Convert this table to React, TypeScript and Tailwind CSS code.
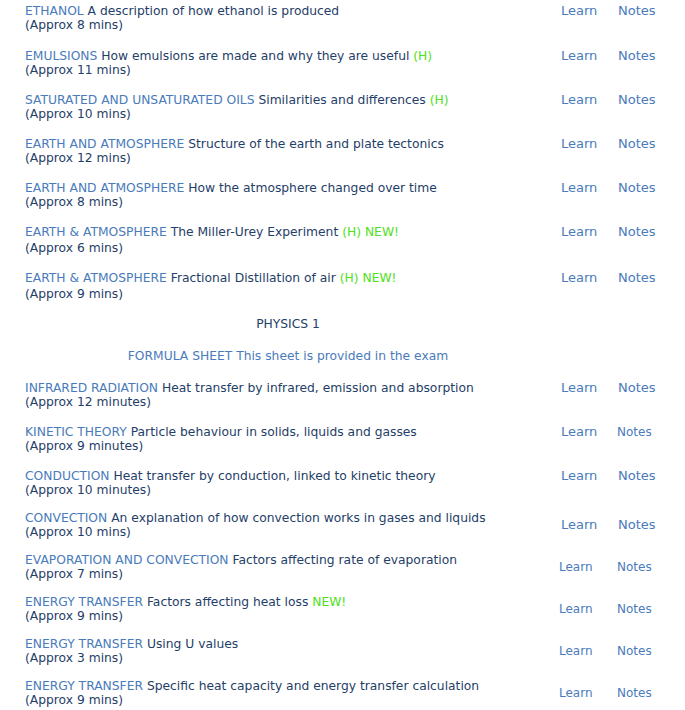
type Row = {
  cat: string;
  desc: string;
  time: string;
  h?: boolean;
  isNew?: boolean;
  gap: string;
  tall?: boolean;
  small?: boolean;
  middle?: boolean;
  notesSmall?: boolean;
};

const chemistry: Row[] = [
  { cat: "ETHANOL", desc: "A description of how ethanol is produced", time: "(Approx 8 mins)", gap: "mt-[4px]" },
  { cat: "EMULSIONS", desc: "How emulsions are made and why they are useful", h: true, time: "(Approx 11 mins)", gap: "mt-[17px]" },
  { cat: "SATURATED AND UNSATURATED OILS", desc: "Similarities and differences", h: true, time: "(Approx 10 mins)", gap: "mt-[16px]" },
  { cat: "EARTH AND ATMOSPHERE", desc: "Structure of the earth and plate tectonics", time: "(Approx 12 mins)", gap: "mt-[16px]" },
  { cat: "EARTH AND ATMOSPHERE", desc: "How the atmosphere changed over time", time: "(Approx 8 mins)", gap: "mt-[16px]" },
  { cat: "EARTH & ATMOSPHERE", desc: "The Miller-Urey Experiment", h: true, isNew: true, time: "(Approx 6 mins)", gap: "mt-[16px]", tall: true },
  { cat: "EARTH & ATMOSPHERE", desc: "Fractional Distillation of air", h: true, isNew: true, time: "(Approx 9 mins)", gap: "mt-[16px]", tall: true },
];

const physics: Row[] = [
  { cat: "INFRARED RADIATION", desc: "Heat transfer by infrared, emission and absorption", time: "(Approx 12 minutes)", gap: "mt-[18px]" },
  { cat: "KINETIC THEORY", desc: "Particle behaviour in solids, liquids and gasses", time: "(Approx 9 minutes)", gap: "mt-[16px]", notesSmall: true },
  { cat: "CONDUCTION", desc: "Heat transfer by conduction, linked to kinetic theory", time: "(Approx 10 minutes)", gap: "mt-[16px]" },
  { cat: "CONVECTION", desc: "An explanation of how convection works in gases and liquids", time: "(Approx 10 mins)", gap: "mt-[14px]", middle: true },
  { cat: "EVAPORATION AND CONVECTION", desc: "Factors affecting rate of evaporation", time: "(Approx 7 mins)", gap: "mt-[14px]", middle: true, small: true },
  { cat: "ENERGY TRANSFER", desc: "Factors affecting heat loss", isNew: true, time: "(Approx 9 mins)", gap: "mt-[14px]", middle: true, small: true },
  { cat: "ENERGY TRANSFER", desc: "Using U values", time: "(Approx 3 mins)", gap: "mt-[14px]", middle: true, small: true },
  { cat: "ENERGY TRANSFER", desc: "Specific heat capacity and energy transfer calculation", time: "(Approx 9 mins)", gap: "mt-[14px]", middle: true, small: true },
];

function TopicRow({ row }: { row: Row }) {
  const cols = row.small ? "grid-cols-[534px_58px_auto]" : "grid-cols-[536px_57px_auto]";
  return (
    <div className={`grid ${cols} pl-[25px] ${row.middle ? "items-center" : "items-start"} ${row.gap}`}>
      <div className="text-[12.3px] leading-[14px] text-[#1f4068]">
        <div>
          <a href="#" className="text-[#4a7bbb]">{row.cat}</a> {row.desc}
          {row.h && <span className="text-[#4fe021]"> (H)</span>}
          {row.isNew && <span className="text-[#4fe021]"> NEW!</span>}
        </div>
        <div className={row.tall ? "mt-[2px]" : ""}>{row.time}</div>
      </div>
      <a href="#" className={`${row.small ? "text-[12px]" : "text-[13px]"} leading-[14px] text-[#4a7bbb]`}>
        Learn
      </a>
      <a
        href="#"
        className={`${row.small || row.notesSmall ? "text-[12px]" : "text-[13px]"} ${row.notesSmall ? "-ml-px" : ""} leading-[14px] text-[#4a7bbb]`}
      >
        Notes
      </a>
    </div>
  );
}

export default function App() {
  return (
    <div className="w-[685px] min-h-[710px] bg-white" style={{ fontFamily: "Verdana, 'DejaVu Sans', sans-serif" }}>
      {chemistry.map((r, i) => (
        <TopicRow key={i} row={r} />
      ))}

      <div className="ml-[25px] w-[526px] text-center text-[12.3px] leading-[14px] text-[#1f4068] mt-[16px]">
        PHYSICS 1
      </div>
      <div className="ml-[25px] w-[526px] text-center text-[12.3px] leading-[14px] text-[#4a7bbb] mt-[18px]">
        <a href="#">FORMULA SHEET</a> This sheet is provided in the exam
      </div>

      {physics.map((r, i) => (
        <TopicRow key={i} row={r} />
      ))}
    </div>
  );
}
